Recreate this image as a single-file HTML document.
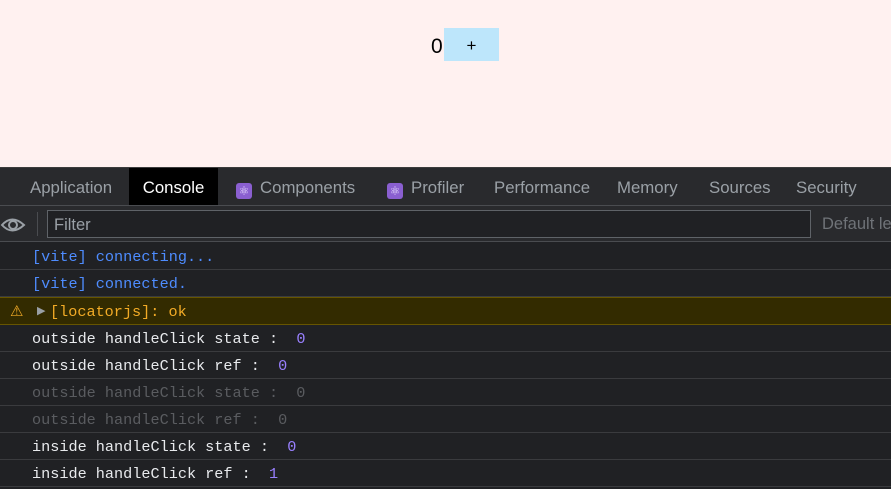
<!DOCTYPE html><html><head><style>
body{margin:0;width:891px;height:489px;overflow:hidden;background:#202124;font-family:"Liberation Sans",sans-serif}
.top{height:167px;background:#fff1f0;position:relative}
.zero{position:absolute;left:431px;top:35px;font-size:21px;color:#000}
.btn{position:absolute;left:444px;top:28px;width:55px;height:33px;background:#bde6fb;text-align:center;line-height:36px;font-size:17px}
.tabs{height:37px;background:#292a2d;border-top:1px solid #3c3c3c;border-bottom:1px solid #4a4c50;position:relative;color:#9aa0a6;font-size:16.8px}
.tabs span{position:absolute;top:0;line-height:39px;height:37px}
.ico{display:inline-block;width:16px;height:16px;background:#8a5fd0;border-radius:3px;vertical-align:-2px;margin-right:8px;color:#e8dcff;font-size:12px;line-height:16px;text-align:center;font-style:normal}
.filter{height:35px;background:#292a2d;border-bottom:1px solid #4a4c50;position:relative}
.fbox{position:absolute;left:47px;top:4px;color:#9aa0a6;font-size:16.5px;line-height:28px;padding-left:6px;box-sizing:border-box;width:764px;height:28px;border:1px solid #5f6368;background:#202124}
.rows{padding-top:1px}
.row{height:26px;border-bottom:1px solid #3a3b3e;font-family:"Liberation Mono",monospace;font-size:15.2px;line-height:29px;padding-left:32px;color:#e8eaed;white-space:pre;position:relative}
.b{color:#4e8cff}.n{color:#9980ff}.d{color:#5a5c60}
.warn{background:#332b00;border-top:1px solid #665500;border-bottom:1px solid #665500;color:#f2ab26;padding-left:50px;height:26px}
</style></head><body>
<div class="top"><div class="zero">0</div><div class="btn">+</div></div>
<div class="tabs">
<span style="left:30px">Application</span>
<span style="left:129px;width:89px;background:#000;color:#fff;text-align:center">Console</span>
<span style="left:236px"><i class="ico">⚛</i>Components</span>
<span style="left:387px"><i class="ico">⚛</i>Profiler</span>
<span style="left:494px">Performance</span>
<span style="left:617px">Memory</span>
<span style="left:709px">Sources</span>
<span style="left:796px">Security</span>
</div>
<div class="filter">
<svg style="position:absolute;left:0;top:10px" width="26" height="18" viewBox="0 0 26 18"><path d="M2 9Q12 -2 24 9Q12 20 2 9Z" fill="none" stroke="#9aa0a6" stroke-width="2"/><circle cx="13" cy="9" r="4" fill="none" stroke="#9aa0a6" stroke-width="2"/></svg>
<div style="position:absolute;left:37px;top:6px;width:1px;height:24px;background:#4a4c50"></div>
<div class="fbox">Filter</div>
<div style="position:absolute;left:822px;top:1px;line-height:35px;color:#6f7378;font-size:16.5px;white-space:nowrap">Default levels</div>
</div>
<div class="rows">
<div class="row b">[vite] connecting...</div>
<div class="row b">[vite] connected.</div>
<div class="row warn"><span style="position:absolute;left:10px;top:0;color:#f2ab26">⚠</span><span style="position:absolute;left:37px;color:#9aa0a6;font-size:11px">▶</span>[locatorjs]: ok</div>
<div class="row">outside handleClick state :  <span class="n">0</span></div>
<div class="row">outside handleClick ref :  <span class="n">0</span></div>
<div class="row d">outside handleClick state :  0</div>
<div class="row d">outside handleClick ref :  0</div>
<div class="row">inside handleClick state :  <span class="n">0</span></div>
<div class="row">inside handleClick ref :  <span class="n">1</span></div>
</div>
</body></html>
